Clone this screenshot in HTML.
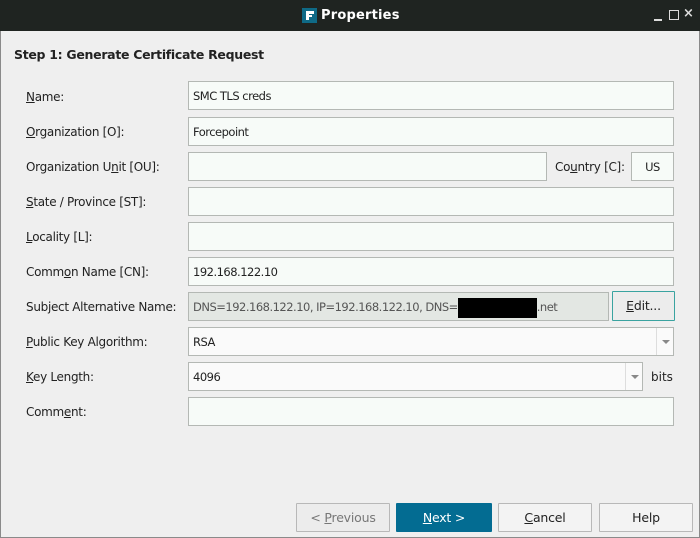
<!DOCTYPE html>
<html><head><style>
*{box-sizing:border-box;margin:0;padding:0}
body{width:700px;height:538px;background:#efefef;font-family:"DejaVu Sans","Liberation Sans",sans-serif;font-size:12px;color:#222;position:relative;overflow:hidden}
.t{position:absolute;left:0;top:0;width:700px;height:31px;background:#1f2421;color:#fff;font-weight:bold;font-size:13px}
.a{position:absolute}
.l{position:absolute;left:26px;font-size:12px;letter-spacing:-0.3px;line-height:16px}
.f{position:absolute;height:29px;border:1px solid #b4b8b4;background:#f7fbf8;padding-left:4px;line-height:29px;font-size:11.5px;letter-spacing:-0.5px}
.b{position:absolute;top:503px;height:29px;border:1px solid #b8b8b8;background:#ececec;text-align:center;line-height:27px;font-size:12.5px;border-radius:1px;letter-spacing:-0.2px}
.dd{position:absolute;right:0;top:0;width:17px;height:27px;border-left:1px solid #ddd}
.dd:after{content:"";position:absolute;left:5px;top:12px;border-left:4px solid transparent;border-right:4px solid transparent;border-top:4px solid #888}
u{text-decoration:underline}
</style></head><body>
<div class="a" style="left:0;top:0;width:1px;height:538px;background:#8a8a8a"></div>
<div class="a" style="right:0;top:0;width:1px;height:538px;background:#8a8a8a"></div>
<div class="a" style="left:0;bottom:0;width:700px;height:1px;background:#8a8a8a"></div>
<div class="t">
<div class="a" style="left:302px;top:8px;width:15px;height:15px;background:#0f6a86"><div class="a" style="left:4px;top:3px;width:8px;height:3px;background:#fff"></div><div class="a" style="left:4px;top:3px;width:3px;height:9px;background:#fff"></div><div class="a" style="left:4px;top:7px;width:6px;height:2px;background:#fff"></div></div>
<div class="a" style="left:321px;top:8px;letter-spacing:0.2px">Properties</div>
<div class="a" style="left:654px;top:19px;width:8px;height:2px;background:#ddd"></div>
<div class="a" style="left:669px;top:10px;width:10px;height:10px;border:1.5px solid #ddd"></div>
<div class="a" style="left:683px;top:6px;color:#ddd;font-size:13px">×</div>
</div>
<div class="a" style="left:14px;top:47px;font-weight:bold;font-size:12.5px;letter-spacing:-0.3px">Step 1: Generate Certificate Request</div>

<div class="l" style="top:89px"><u>N</u>ame:</div>
<div class="f" style="left:188px;top:81px;width:486px">SMC TLS creds</div>
<div class="l" style="top:124px"><u>O</u>rganization [O]:</div>
<div class="f" style="left:188px;top:117px;width:486px">Forcepoint</div>
<div class="l" style="top:159px">Organization U<u>n</u>it [OU]:</div>
<div class="f" style="left:188px;top:152px;width:359px"></div>
<div class="a" style="left:555px;top:159px;letter-spacing:-0.3px;line-height:16px">Co<u>u</u>ntry [C]:</div>
<div class="f" style="left:631px;top:152px;width:43px;text-align:center;padding:0">US</div>
<div class="l" style="top:194px"><u>S</u>tate / Province [ST]:</div>
<div class="f" style="left:188px;top:187px;width:486px"></div>
<div class="l" style="top:229px"><u>L</u>ocality [L]:</div>
<div class="f" style="left:188px;top:222px;width:486px"></div>
<div class="l" style="top:264px">Comm<u>o</u>n Name [CN]:</div>
<div class="f" style="left:188px;top:257px;width:486px">192.168.122.10</div>
<div class="l" style="top:299px">Subject Alternative Name:</div>
<div class="f" style="left:188px;top:292px;width:421px;background:#e3e7e3;color:#555">DNS=192.168.122.10, IP=192.168.122.10, DNS=<span style="display:inline-block;width:79px;height:20px;background:#000;vertical-align:middle"></span>.net</div>
<div class="b" style="left:612px;top:291px;width:63px;height:30px;border-color:#3aa3a0;line-height:28px"><u>E</u>dit...</div>
<div class="l" style="top:334px"><u>P</u>ublic Key Algorithm:</div>
<div class="f" style="left:188px;top:327px;width:486px;background:#fafafa">RSA<div class="dd"></div></div>
<div class="l" style="top:369px"><u>K</u>ey Length:</div>
<div class="f" style="left:188px;top:362px;width:455px;background:#fafafa">4096<div class="dd"></div></div>
<div class="a" style="left:651px;top:369px;line-height:16px">bits</div>
<div class="l" style="top:404px">Comm<u>e</u>nt:</div>
<div class="f" style="left:188px;top:397px;width:486px"></div>

<div class="b" style="left:296px;width:94px;color:#777">&lt; <u>P</u>revious</div>
<div class="b" style="left:396px;width:96px;background:#036c92;border-color:#036c92;color:#fff"><u>N</u>ext &gt;</div>
<div class="b" style="left:498px;width:94px;background:#f3f3f3"><u>C</u>ancel</div>
<div class="b" style="left:599px;width:94px;background:#f3f3f3">Help</div>
</body></html>
